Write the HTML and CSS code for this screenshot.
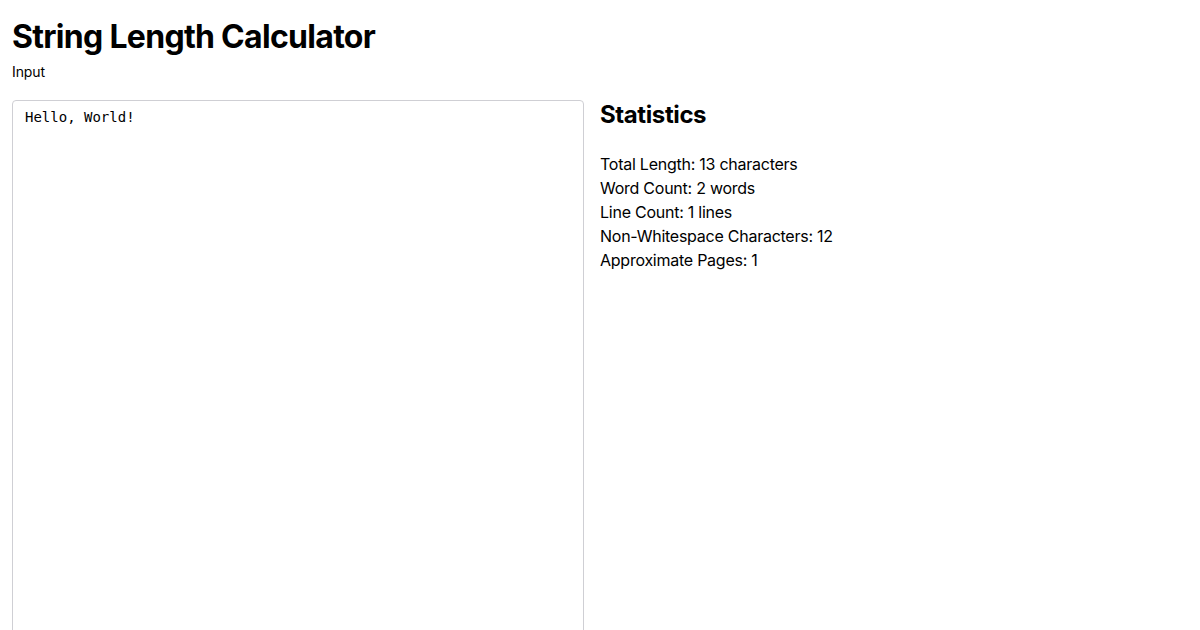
FILE: index.html
```html
<!DOCTYPE html>
<html>
<head>
<meta charset="utf-8">
<link rel="stylesheet" href="styles.css">
</head>
<body>
<div class="page">
  <h1 class="title">String Length Calculator</h1>
  <div class="label">Input</div>
  <div class="grid">
    <textarea class="input">Hello, World!</textarea>
    <div class="stats">
      <h2 class="stats-title">Statistics</h2>
      <div class="stat-list">
        <div class="stat">Total Length: 13 characters</div>
        <div class="stat">Word Count: 2 words</div>
        <div class="stat">Line Count: 1 lines</div>
        <div class="stat">Non-Whitespace Characters: 12</div>
        <div class="stat">Approximate Pages: 1</div>
      </div>
    </div>
  </div>
</div>
</body>
</html>
```
FILE: styles.css
```css
html, body {
  margin: 0;
  padding: 0;
  background: #fff;
  color: #000;
  font-family: Inter, "Noto Sans", sans-serif;
  overflow: hidden;
}
.page {
  padding: 17px 12px;
}
.title {
  margin: 0;
  font-size: 32px;
  font-weight: 700;
  line-height: 40px;
  letter-spacing: -0.7px;
}
.label {
  margin-top: 5px;
  font-size: 14px;
  line-height: 20px;
  letter-spacing: -0.1px;
}
.grid {
  margin-top: 18px;
  display: grid;
  grid-template-columns: 572px 1fr;
  gap: 16px;
}
.input {
  box-sizing: border-box;
  width: 572px;
  height: 620px;
  margin: 0;
  padding: 7px 12px;
  border: 1px solid #cfcfd4;
  border-radius: 4px;
  font-family: "DejaVu Sans Mono", monospace;
  font-size: 14px;
  line-height: 18px;
  color: #000;
  resize: none;
  outline: none;
}
.stats-title {
  margin: 0;
  font-size: 24px;
  font-weight: 700;
  line-height: 30px;
  letter-spacing: -0.4px;
}
.stat-list {
  margin-top: 22px;
}
.stat {
  font-size: 16px;
  line-height: 24px;
  letter-spacing: -0.25px;
}
```
